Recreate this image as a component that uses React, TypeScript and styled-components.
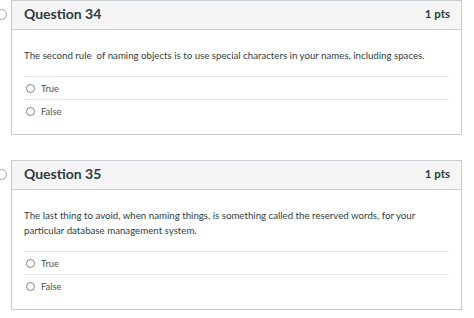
import styled, { createGlobalStyle } from "styled-components";

const GlobalStyle = createGlobalStyle`
    body {
        margin: 0;
        background: #ffffff;
        font-family: Lato, "Open Sans", sans-serif;
        color: #2d3b45;
    }
`;

const Page = styled.div`
    display: flex;
    flex-direction: column;
    gap: 25px;
    padding: 0 12px 0 11px;
    width: 451px;
`;

const Card = styled.div`
    position: relative;
    border: 1px solid #c7cdd1;
    background: #ffffff;
`;

const Flag = styled.div`
    position: absolute;
    left: -16px;
    top: 8px;
    width: 9px;
    height: 9px;
    border: 1px solid #9aa3a8;
    border-radius: 50%;
`;

const Header = styled.div`
    height: 25px;
    display: flex;
    align-items: center;
    justify-content: space-between;
    padding: 0 11px 3px 12px;
    background: #f5f5f5;
    border-bottom: 1px solid #c7cdd1;
`;

const Title = styled.div`
    font-size: 14px;
    font-weight: 700;
    color: #2d3b45;
`;

const Points = styled.div`
    font-size: 11.5px;
    font-weight: 700;
    color: #2d3b45;
`;

const Body = styled.div`
    padding: 18px 12px 12px;
`;

const Text = styled.p`
    margin: 0 0 13px;
    font-size: 9.7px;
    line-height: 15px;
    color: #333c42;
`;

const Answer = styled.label`
    height: 22px;
    display: flex;
    align-items: center;
    gap: 6px;
    padding-left: 2px;
    border-top: 1px solid #e4e6e8;
    font-size: 9.3px;
    color: #4a5358;
`;

const Radio = styled.span`
    width: 7px;
    height: 7px;
    border: 1px solid #7b858a;
    border-radius: 50%;
    background: #fff;
`;

interface IQuestion {
    num: number;
    text: string;
}

const questions: IQuestion[] = [
    {
        num: 34,
        text: "The second rule\u00a0 of naming objects is to use special characters in your names, including spaces.",
    },
    {
        num: 35,
        text: "The last thing to avoid, when naming things, is something called the reserved words, for your particular database management system.",
    },
];

function Question({ num, text }: IQuestion) {
    return (
        <Card>
            <Flag />
            <Header>
                <Title>Question {num}</Title>
                <Points>1 pts</Points>
            </Header>
            <Body>
                <Text>{text}</Text>
                {["True", "False"].map((label) => (
                    <Answer key={label}>
                        <Radio />
                        {label}
                    </Answer>
                ))}
            </Body>
        </Card>
    );
}

export default function App() {
    return (
        <>
            <GlobalStyle />
            <Page>
                {questions.map((q) => (
                    <Question key={q.num} {...q} />
                ))}
            </Page>
        </>
    );
}
